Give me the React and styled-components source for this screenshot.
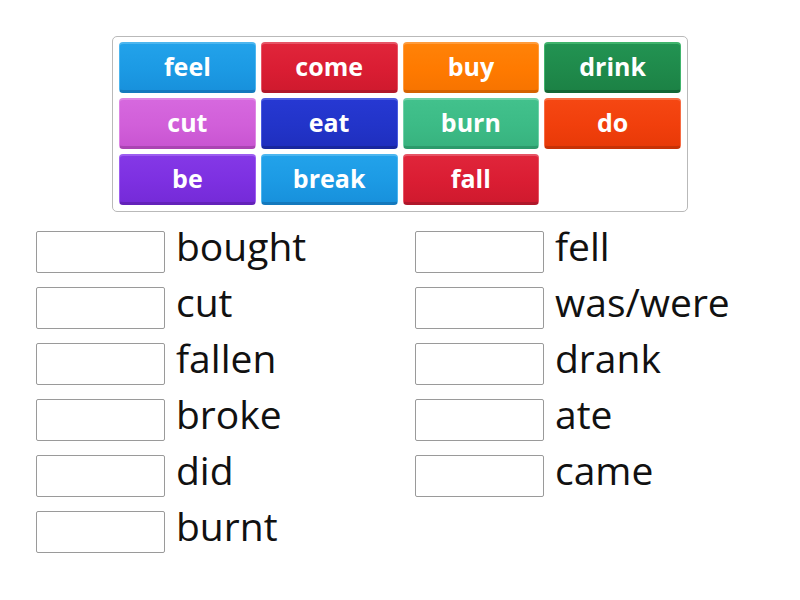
import React from "react";
import styled, { createGlobalStyle } from "styled-components";

const Global = createGlobalStyle`
  html, body { margin: 0; padding: 0; background: #fff; }
  body { font-family: "Open Sans", "Noto Sans", sans-serif; }
`;

const Page = styled.div`
  width: 800px;
  height: 600px;
  padding-top: 36px;
  box-sizing: border-box;
  display: flex;
  flex-direction: column;
  align-items: stretch;
`;

const Board = styled.div`
  align-self: center;
  width: 576px;
  box-sizing: border-box;
  border: 1px solid #b9b9b9;
  border-radius: 5px;
  padding: 5px 6px 6px 6px;
  display: grid;
  grid-template-columns: repeat(4, 1fr);
  grid-auto-rows: 51px;
  column-gap: 5px;
  row-gap: 5px;
`;

const Tile = styled.div`
  box-sizing: border-box;
  border-radius: 4px;
  background: linear-gradient(180deg, ${(p) => p.$top} 0%, ${(p) => p.$bg} 55%, ${(p) => p.$bottom} 100%);
  border-top: 2px solid ${(p) => p.$light};
  border-left: 1px solid ${(p) => p.$light};
  border-right: 1px solid ${(p) => p.$light};
  border-bottom: 3px solid ${(p) => p.$dark};
  padding-bottom: 3px;
  color: #fff;
  font-family: "Open Sans", sans-serif;
  font-weight: 700;
  font-size: 25px;
  display: flex;
  align-items: center;
  justify-content: center;
`;

const Answers = styled.div`
  margin-top: 19px;
  padding-left: 36px;
  display: grid;
  grid-template-columns: 379px 379px;
  align-items: start;
`;

const Column = styled.div`
  display: flex;
  flex-direction: column;
  gap: 14px;
`;

const Row = styled.div`
  display: flex;
  align-items: flex-start;
  height: 42px;
`;

const Slot = styled.div`
  width: 129px;
  height: 42px;
  box-sizing: border-box;
  border: 1px solid #9a9a9a;
  border-radius: 2px;
  background: #fff;
  flex: none;
`;

const Label = styled.div`
  margin-left: 11px;
  margin-top: -5px;
  font-family: "Open Sans", sans-serif;
  font-size: 39px;
  line-height: 39px;
  color: #111;
  white-space: nowrap;
`;

const palette = {
  blue: { bg: "#1c9ae4", top: "#22a2ea", bottom: "#1891dc", light: "#4cb6ef", dark: "#1479bd" },
  red: { bg: "#da1d33", top: "#e0253a", bottom: "#d01a2e", light: "#e65566", dark: "#b0172a" },
  orange: { bg: "#ff7a00", top: "#ff8208", bottom: "#f77400", light: "#ff9c3c", dark: "#d56200" },
  green: { bg: "#1f8a4b", top: "#229352", bottom: "#1c8245", light: "#3fb46c", dark: "#146636" },
  pink: { bg: "#d15fd9", top: "#d668de", bottom: "#c955d2", light: "#de86e4", dark: "#aa44b3" },
  navy: { bg: "#2234c9", top: "#2638d2", bottom: "#1f2fbf", light: "#4a5be0", dark: "#19279e" },
  mint: { bg: "#3cbb86", top: "#42c18c", bottom: "#38b37f", light: "#6fd1a8", dark: "#2c9a6b" },
  vermilion: { bg: "#f13f0c", top: "#f54712", bottom: "#e83a08", light: "#f76c44", dark: "#c73206" },
  purple: { bg: "#7d30e1", top: "#8438e6", bottom: "#752bd8", light: "#9d5ef0", dark: "#6322b9" },
};

const tiles = [
  ["feel", "blue"],
  ["come", "red"],
  ["buy", "orange"],
  ["drink", "green"],
  ["cut", "pink"],
  ["eat", "navy"],
  ["burn", "mint"],
  ["do", "vermilion"],
  ["be", "purple"],
  ["break", "blue"],
  ["fall", "red"],
];

const left = ["bought", "cut", "fallen", "broke", "did", "burnt"];
const right = ["fell", "was/were", "drank", "ate", "came"];

export default function App() {
  return (
    <>
      <Global />
      <Page>
        <Board>
          {tiles.map(([w, c]) => {
            const p = palette[c];
            return (
              <Tile key={w} $bg={p.bg} $top={p.top} $bottom={p.bottom} $light={p.light} $dark={p.dark}>
                {w}
              </Tile>
            );
          })}
        </Board>
        <Answers>
          <Column>
            {left.map((w) => (
              <Row key={w}>
                <Slot />
                <Label>{w}</Label>
              </Row>
            ))}
          </Column>
          <Column>
            {right.map((w) => (
              <Row key={w}>
                <Slot />
                <Label>{w}</Label>
              </Row>
            ))}
          </Column>
        </Answers>
      </Page>
    </>
  );
}
